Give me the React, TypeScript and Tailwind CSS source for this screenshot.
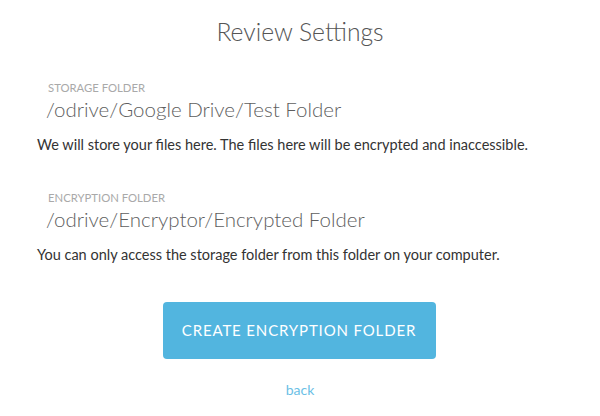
import React from "react";

function Section({ label, path, desc }: { label: string; path: string; desc: string }) {
  return (
    <div>
      <div className="pl-[48px] text-[11.3px] leading-[13px] uppercase text-[#a9a9a9] font-normal">{label}</div>
      <div className="pl-[46px] mt-[3px] text-[20.5px] leading-[24px] font-light text-[#5e5e5e]">{path}</div>
      <div className="pl-[37px] mt-[14px] text-[14.5px] leading-[20px] text-[#333333]">{desc}</div>
    </div>
  );
}

export default function App() {
  return (
    <div
      className="w-[600px] h-[416px] bg-white overflow-hidden"
      style={{ fontFamily: "Lato, 'Open Sans', sans-serif" }}
    >
      <h1 className="pt-[17px] text-center text-[24.7px] leading-[30px] font-light text-[#555555]">
        Review Settings
      </h1>
      <div className="mt-[34px]">
        <Section
          label="Storage Folder"
          path="/odrive/Google Drive/Test Folder"
          desc="We will store your files here. The files here will be encrypted and inaccessible."
        />
      </div>
      <div className="mt-[36px]">
        <Section
          label="Encryption Folder"
          path="/odrive/Encryptor/Encrypted Folder"
          desc="You can only access the storage folder from this folder on your computer."
        />
      </div>
      <div className="mt-[37px] flex justify-center">
        <button className="ml-[-2px] w-[273px] h-[57px] rounded-[4px] bg-[#52b5df] text-white text-[15px] tracking-[0.85px] uppercase">
          Create Encryption Folder
        </button>
      </div>
      <div className="mt-[21px] text-center text-[14px] leading-[20px] text-[#6cbfe6]">back</div>
    </div>
  );
}
